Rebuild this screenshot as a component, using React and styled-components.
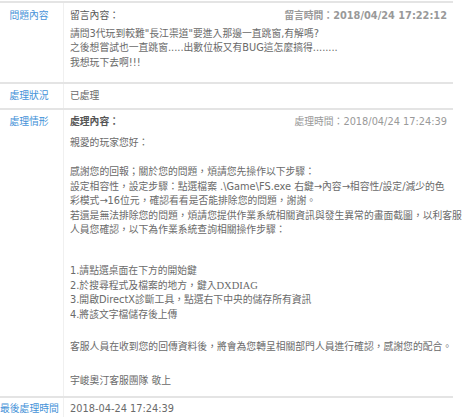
import styled, { createGlobalStyle } from "styled-components"

const GlobalStyle = createGlobalStyle`
    body {
        margin: 0;
        background: #fff;
        font-family: "DejaVu Sans", "Noto Sans CJK TC", sans-serif;
    }
`

export default function App() {
    return (
        <>
            <GlobalStyle />
            <Table>
                <Row $pb={12}>
                    <Label>問題內容</Label>
                    <Cell>
                        <CellHead $mb={3}>
                            <HeadTitle>留言內容：</HeadTitle>
                            <Stamp $bold>留言時間：2018/04/24 17:22:12</Stamp>
                        </CellHead>
                        <Line>請問3代玩到較難"長江渠道"要進入那邊一直跳窗,有解嗎?</Line>
                        <Line>之後想嘗試也一直跳窗.....出數位板又有BUG這怎麼搞得........</Line>
                        <Line>我想玩下去啊!!!</Line>
                    </Cell>
                </Row>

                <Row $pt={5} $pb={4}>
                    <Label>處理狀況</Label>
                    <Cell>
                        <Line>已處理</Line>
                    </Cell>
                </Row>

                <Row $pt={5} $pb={8}>
                    <Label>處理情形</Label>
                    <Cell>
                        <CellHead $mb={7}>
                            <HeadTitle $bold>處理內容：</HeadTitle>
                            <Stamp>處理時間：2018/04/24 17:24:39</Stamp>
                        </CellHead>
                        <Line>親愛的玩家您好：</Line>
                        <Gap $h={14.75} />
                        <Line>感謝您的回報；關於您的問題，煩請您先操作以下步驟：</Line>
                        <Line>設定相容性，設定步驟：點選檔案 .\Game\FS.exe 右鍵→內容→相容性/設定/減少的色</Line>
                        <Line>彩模式→16位元，確認看看是否能排除您的問題，謝謝。</Line>
                        <Line>若還是無法排除您的問題，煩請您提供作業系統相關資訊與發生異常的畫面截圖，以利客服</Line>
                        <Line>人員您確認，以下為作業系統查詢相關操作步驟：</Line>
                        <Gap $h={26.5} />
                        <Line>1.請點選桌面在下方的開始鍵</Line>
                        <Line>2.於搜尋程式及檔案的地方，鍵入<Serif>DXDIAG</Serif></Line>
                        <Line>3.開啟DirectX診斷工具，點選右下中央的儲存所有資訊</Line>
                        <Line>4.將該文字檔儲存後上傳</Line>
                        <Gap $h={17.5} />
                        <Line>客服人員在收到您的回傳資料後，將會為您轉呈相關部門人員進行確認，感謝您的配合。</Line>
                        <Gap $h={19.5} />
                        <Line>宇峻奧汀客服團隊 敬上</Line>
                    </Cell>
                </Row>

                <Row $pt={4} $pb={6}>
                    <Label>最後處理時間</Label>
                    <Cell>
                        <Line>2018-04-24 17:24:39</Line>
                    </Cell>
                </Row>
            </Table>
        </>
    )
}

const Table = styled.div`
    width: 453px;
    margin-top: 1px;
    border-top: 2px solid #e4e4e4;
    font-size: 9.8px;
    line-height: 14.5px;
    color: #6a6a6a;
`

const Row = styled.div`
    display: flex;
    border-bottom: 2px solid #e4e4e4;

    & > * {
        padding-top: ${p => p.$pt ?? 6}px;
        padding-bottom: ${p => p.$pb ?? 6}px;
    }
`

const Label = styled.div`
    width: 58px;
    flex: none;
    padding-right: 5px;
    text-align: center;
    white-space: nowrap;
    color: #4592d8;
    border-right: 1px solid #f0f0f0;
`

const Cell = styled.div`
    flex: 1;
    min-width: 0;
    padding-left: 6px;
    padding-right: 6px;
    white-space: nowrap;
`

const CellHead = styled.div`
    display: flex;
    justify-content: space-between;
    align-items: center;
    margin-bottom: ${p => p.$mb}px;
`

const HeadTitle = styled.span`
    color: #555;
    font-weight: ${p => (p.$bold ? 700 : 400)};
`

const Stamp = styled.span`
    color: #999;
    font-weight: ${p => (p.$bold ? 700 : 400)};
`

const Line = styled.div`
    height: 14.5px;
`

const Gap = styled.div`
    height: ${p => p.$h}px;
`

const Serif = styled.span`
    font-family: "Liberation Serif", serif;
    font-size: 10.5px;
`
